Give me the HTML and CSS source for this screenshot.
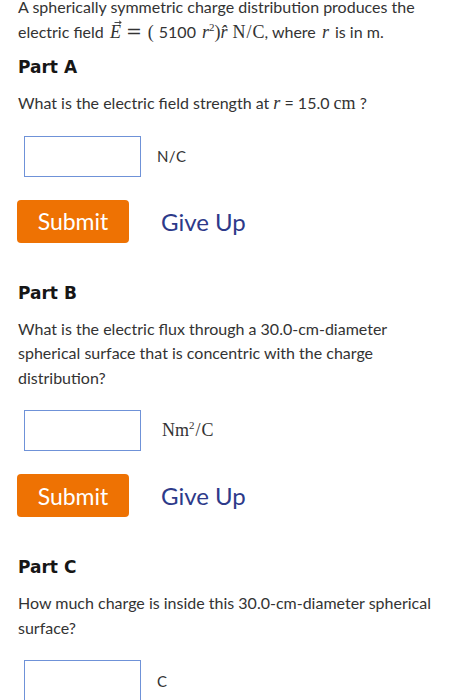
FILE: index.html
```html
<!DOCTYPE html>
<html>
<head>
<meta charset="utf-8">
<link rel="stylesheet" href="styles.css">
</head>
<body>
<div class="page">
  <p class="intro">A spherically symmetric charge distribution produces the electric field <span class="m"><span class="vec"><i>E</i><svg class="arr" width="8" height="5" viewBox="0 0 8 5"><path d="M0.5 2.5H7M5 0.8L7.3 2.5L5 4.2" fill="none" stroke="#333" stroke-width="0.9"/></svg></span><span class="eq">=</span><span class="par">(</span></span>5100<span class="m"><i class="rr">r</i><sup>2</sup>)<i>r&#770;</i><span class="nc">N<span class="sl">/</span>C</span></span>, where <span class="m"><i class="rv">r</i></span> is in m.</p>

  <section class="part">
    <h2 class="head first">Part A</h2>
    <p class="q">What is the electric field strength at <span class="m"><i>r</i></span> = 15.0 <span class="m">cm</span> ?</p>
    <div class="answer">
      <div class="box"></div>
      <span class="unit">N/C</span>
    </div>
    <div class="actions">
      <button class="submit">Submit</button>
      <span class="giveup">Give Up</span>
    </div>
  </section>

  <section class="part">
    <h2 class="head">Part B</h2>
    <p class="q">What is the electric flux through a 30.0-cm-diameter spherical surface that is concentric with the charge distribution?</p>
    <div class="answer">
      <div class="box"></div>
      <span class="unit serif">Nm<sup>2</sup><span class="sl">/</span>C</span>
    </div>
    <div class="actions">
      <button class="submit">Submit</button>
      <span class="giveup">Give Up</span>
    </div>
  </section>

  <section class="part">
    <h2 class="head">Part C</h2>
    <p class="q">How much charge is inside this 30.0-cm-diameter spherical surface?</p>
    <div class="answer">
      <div class="box"></div>
      <span class="unit">C</span>
    </div>
  </section>
</div>
</body>
</html>
```

FILE: styles.css
```css
html, body {
  margin: 0;
  padding: 0;
  background: #ffffff;
}

.page {
  width: 422px;
  padding: 0 0 0 18px;
  font-family: Lato, "Open Sans", sans-serif;
  font-size: 16px;
  color: #333333;
}

.intro {
  margin: -5px 0 0 0;
  line-height: 24px;
}

.m {
  font-family: "Liberation Serif", "DejaVu Serif", serif;
  font-size: 18px;
}

.m sup, .unit sup {
  font-size: 11px;
  line-height: 0;
}

.vec {
  position: relative;
  display: inline-block;
  margin-left: 2px;
}

.arr {
  position: absolute;
  left: 4px;
  top: 0;
}

.eq {
  font-family: "DejaVu Serif", serif;
  font-weight: 300;
  font-size: 19px;
  margin: 0 6px 0 5px;
}

.par {
  margin-right: 5px;
}

.rr {
  margin-left: 6px;
}

.nc {
  margin-left: 5px;
}

.sl {
  margin: 0 1px;
}

.rv {
  margin: 0 2px;
}

.head {
  margin: 40px 0 0 0;
  font-family: "DejaVu Sans", Verdana, sans-serif;
  font-size: 17px;
  font-weight: 700;
  line-height: 20px;
  color: #161616;
}

.head.first {
  margin-top: 13px;
}

.q {
  margin: 14px 0 0 0;
  line-height: 24.5px;
}

.answer {
  margin: 20px 0 0 6px;
  display: flex;
  align-items: center;
  gap: 16px;
}

.box {
  width: 115px;
  height: 39px;
  border: 1px solid #6f92d8;
  background: #ffffff;
}

.unit {
  font-size: 15px;
  letter-spacing: 0.4px;
  color: #333333;
}

.unit.serif {
  font-family: "Liberation Serif", "DejaVu Serif", serif;
  font-size: 18px;
  letter-spacing: 0;
  margin-left: 5px;
}

.actions {
  margin: 23px 0 0 -1px;
  display: flex;
  align-items: center;
  gap: 32px;
}

.submit {
  width: 112px;
  height: 43px;
  border: none;
  border-radius: 4px;
  background: #ee7203;
  color: #ffffff;
  font-family: Lato, "Open Sans", sans-serif;
  font-size: 23px;
  padding: 0;
}

.giveup {
  font-size: 24px;
  color: #2d3a8a;
}
```
